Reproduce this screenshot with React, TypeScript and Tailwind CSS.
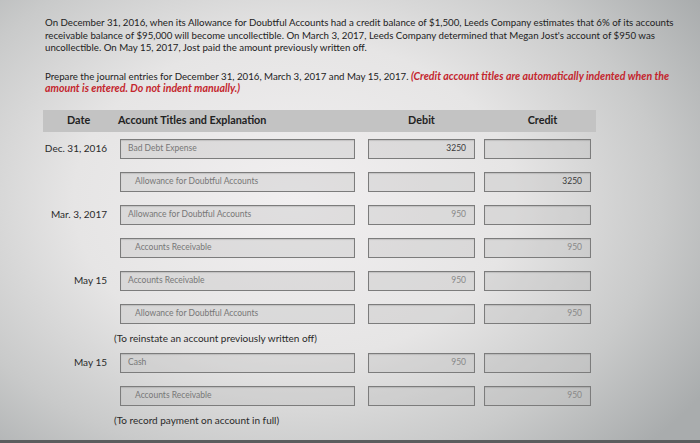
import React from "react";

type Row = {
  date?: string;
  account: string;
  credit?: boolean;
  debit?: string;
  creditAmt?: string;
  dark?: boolean;
  note?: string;
};

const rows: Row[] = [
  { date: "Dec. 31, 2016", account: "Bad Debt Expense", debit: "3250", dark: true },
  { account: "Allowance for Doubtful Accounts", credit: true, creditAmt: "3250", dark: true },
  { date: "Mar. 3, 2017", account: "Allowance for Doubtful Accounts", debit: "950" },
  { account: "Accounts Receivable", credit: true, creditAmt: "950" },
  { date: "May 15", account: "Accounts Receivable", debit: "950" },
  {
    account: "Allowance for Doubtful Accounts",
    credit: true,
    creditAmt: "950",
    note: "(To reinstate an account previously written off)",
  },
  { date: "May 15", account: "Cash", debit: "950" },
  {
    account: "Accounts Receivable",
    credit: true,
    creditAmt: "950",
    note: "(To record payment on account in full)",
  },
];

const box =
  "h-[20px] border border-[#7c7c7c] bg-[rgba(185,185,185,0.3)] shadow-[inset_0_1px_1px_rgba(0,0,0,0.12)] flex items-center text-[8.5px] whitespace-nowrap";

function EntryRow({ row, first }: { row: Row; first: boolean }) {
  return (
    <div className={first ? "" : "mt-[13px]"}>
      <div className="grid grid-cols-[77px_235px_107px_107px]">
        <div className="flex items-center justify-end pr-[13px] text-[10px] text-[#2a2a2a] whitespace-nowrap">
          {row.date}
        </div>
        <div className={`${box} ${row.credit ? "pl-[14px]" : "pl-[7px]"} text-[#777]`}>
          {row.account}
        </div>
        <div className={`${box} ml-[13px] w-[107px] justify-end pr-[8px] ${row.dark ? "text-[#3a3a3a]" : "text-[#888]"}`}>
          {row.debit}
        </div>
        <div className={`${box} ml-[22px] w-[107px] justify-end pr-[8px] ${row.dark ? "text-[#3a3a3a]" : "text-[#888]"}`}>
          {row.creditAmt}
        </div>
      </div>
      {row.note && (
        <div className="pl-[71px] mt-[8px] -mb-[5px] text-[10px] leading-[13px] text-[#2a2a2a] whitespace-nowrap">
          {row.note}
        </div>
      )}
    </div>
  );
}

export default function App() {
  return (
    <div className="w-[700px] h-[443px] overflow-hidden flex flex-col font-['Lato','Open_Sans',sans-serif] text-[#2a2a2a] bg-[radial-gradient(ellipse_70%_80%_at_42%_45%,#f1eff0_0%,#e6e5e5_45%,#c9caca_75%,#a9acad_100%)]">
      <div className="pl-[45px] pt-[16px] text-[9.7px] leading-[12.5px] whitespace-nowrap text-[#222]">
        <p>
          On December 31, 2016, when its Allowance for Doubtful Accounts had a credit balance of $1,500, Leeds Company estimates that 6% of its accounts
          <br />
          receivable balance of $95,000 will become uncollectible. On March 3, 2017, Leeds Company determined that Megan Jost's account of $950 was
          <br />
          uncollectible. On May 15, 2017, Jost paid the amount previously written off.
        </p>
        <p className="mt-[16px]">
          Prepare the journal entries for December 31, 2016, March 3, 2017 and May 15, 2017.{" "}
          <span className="font-bold italic text-[#c4262e] text-[10.6px] leading-[12.5px]">
            (Credit account titles are automatically indented when the
            <br />
            amount is entered. Do not indent manually.)
          </span>
        </p>
      </div>

      <div className="ml-[43px] mt-[15px] w-[553px]">
        <div className="h-[22px] bg-[#c3c3c3] flex items-center text-[10.8px] font-bold text-[#222]">
          <div className="w-[75px] pl-[24px]">Date</div>
          <div className="w-[250px]">Account Titles and Explanation</div>
          <div className="w-[107px] text-center">Debit</div>
          <div className="w-[14px]" />
          <div className="w-[107px] text-center">Credit</div>
        </div>
        <div className="mt-[7px]">
          {rows.map((r, i) => (
            <EntryRow key={i} row={r} first={i === 0} />
          ))}
        </div>
      </div>

      <div className="mt-auto h-[3px] bg-[#5b5d5e]" />
    </div>
  );
}
